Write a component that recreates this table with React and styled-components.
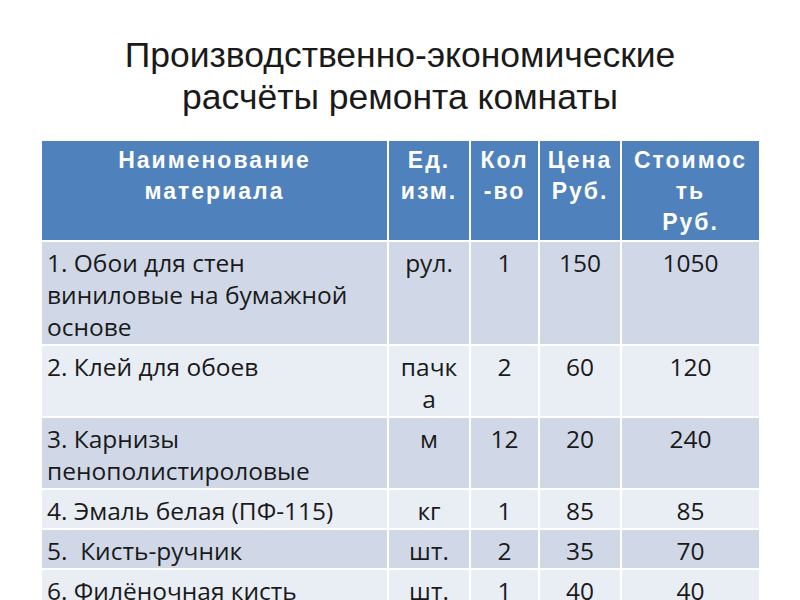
import React from 'react';
import styled, { createGlobalStyle } from 'styled-components';

const GlobalStyle = createGlobalStyle`
  html, body {
    margin: 0;
    padding: 0;
    background: #ffffff;
  }
`;

const columns = [347, 82, 69, 82, 139];

const header = [
  ['Наименование', 'материала'],
  ['Ед.', 'изм.'],
  ['Кол', '-во'],
  ['Цена', 'Руб.'],
  ['Стоимос', 'ть', 'Руб.'],
];

const rows = [
  { name: ['1. Обои для стен', 'виниловые на бумажной', 'основе'], unit: ['рул.'], qty: '1', price: '150', total: '1050' },
  { name: ['2. Клей для обоев'], unit: ['пачк', 'а'], qty: '2', price: '60', total: '120' },
  { name: ['3. Карнизы', 'пенополистироловые'], unit: ['м'], qty: '12', price: '20', total: '240' },
  { name: ['4. Эмаль белая (ПФ-115)'], unit: ['кг'], qty: '1', price: '85', total: '85' },
  { name: ['5.\u00a0 Кисть-ручник'], unit: ['шт.'], qty: '2', price: '35', total: '70' },
  { name: ['6. Филёночная кисть'], unit: ['шт.'], qty: '1', price: '40', total: '40' },
];

function Lines({ items }) {
  return items.map((t, i) => (
    <React.Fragment key={i}>
      {i > 0 && <br />}
      {t}
    </React.Fragment>
  ));
}

export default function App() {
  return (
    <Page>
      <GlobalStyle />
      <Title>
        Производственно-экономические
        <br />
        расчёты ремонта комнаты
      </Title>
      <Table>
        <colgroup>
          {columns.map((w, i) => (
            <col key={i} style={{ width: w }} />
          ))}
        </colgroup>
        <thead>
          <tr>
            {header.map((h, i) => (
              <HeadCell key={i}>
                <Lines items={h} />
              </HeadCell>
            ))}
          </tr>
        </thead>
        <tbody>
          {rows.map((r, i) => (
            <Row key={i} $odd={i % 2 === 0}>
              <Cell $left>
                <Lines items={r.name} />
              </Cell>
              <Cell>
                <Lines items={r.unit} />
              </Cell>
              <Cell>{r.qty}</Cell>
              <Cell>{r.price}</Cell>
              <Cell>{r.total}</Cell>
            </Row>
          ))}
        </tbody>
      </Table>
    </Page>
  );
}

const Page = styled.div`
  width: 800px;
  height: 600px;
  overflow: hidden;
  background: #ffffff;
  padding-top: 34px;
  box-sizing: border-box;
`;

const Title = styled.h1`
  margin: 0 0 23px;
  text-align: center;
  font-family: "Liberation Sans", Arial, sans-serif;
  font-weight: 400;
  font-size: 35.5px;
  line-height: 42px;
  color: #1a1a1a;
`;

const Table = styled.table`
  margin-left: 40px;
  width: 719px;
  table-layout: fixed;
  border-collapse: collapse;
`;

const HeadCell = styled.th`
  background: #4f81bd;
  color: #ffffff;
  font-family: "Liberation Sans", Arial, sans-serif;
  font-weight: 700;
  font-size: 23px;
  letter-spacing: 2px;
  line-height: 31px;
  text-align: center;
  vertical-align: top;
  padding: 4px 0 2px;
  height: 92px;
  border: 2px solid #ffffff;
  border-top: none;
`;

const Row = styled.tr`
  background: ${(p) => (p.$odd ? '#d0d8e8' : '#e9edf4')};
`;

const Cell = styled.td`
  font-family: "Open Sans", "Noto Sans", sans-serif;
  font-size: 24.5px;
  line-height: 32px;
  color: #1a1a1a;
  text-align: ${(p) => (p.$left ? 'left' : 'center')};
  vertical-align: top;
  padding: 5px 5px 1px;
  border: 2px solid #ffffff;
`;
